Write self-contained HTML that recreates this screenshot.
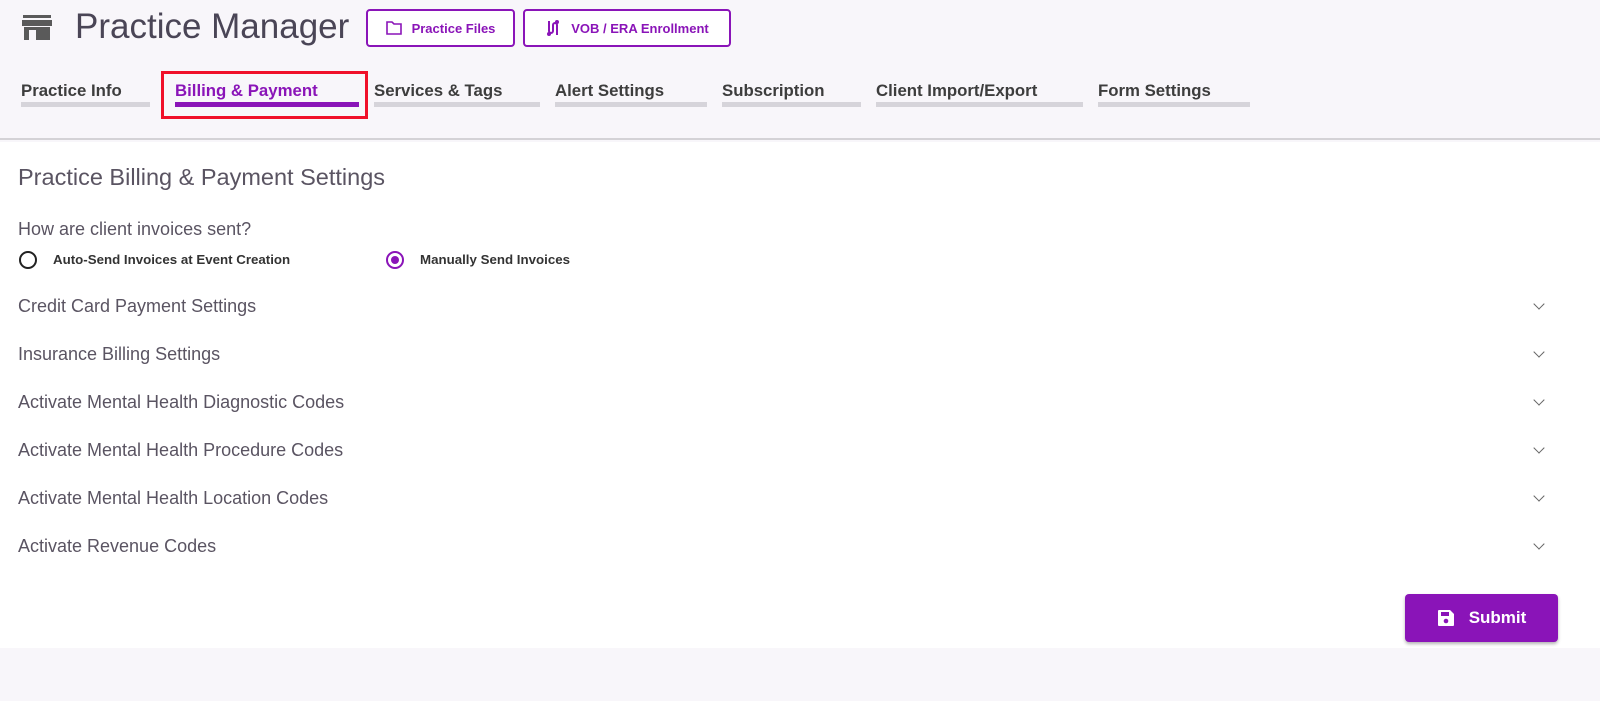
<!DOCTYPE html>
<html><head><meta charset="utf-8"><style>
*{box-sizing:border-box;margin:0;padding:0}
body{width:1600px;height:701px;background:#f8f6fa;font-family:"Liberation Sans",sans-serif;color:#555;position:relative;overflow:hidden}
.abs{position:absolute}
.hdr{left:0;top:0;width:1600px;height:140px;background:#f8f6fa;border-bottom:2px solid #d4d2d6}
.title{left:75px;top:7px;font-size:35px;color:#4a4556;letter-spacing:0}
.btn{border:2px solid #8a14b8;border-radius:4px;color:#8a14b8;font-size:13px;background:#fff;display:flex;align-items:center;justify-content:center;gap:10px;font-weight:bold}
.tab{top:81px;font-size:16.8px;font-weight:bold;color:#3d3d3d}
.ul{top:102px;height:5px;background:#d6d4da}
.main{left:0;top:142px;width:1600px;height:506px;background:#fff}
.sec{left:18px;font-size:18px;color:#5a5462}
.chev{left:1535px;width:8px;height:8px;border-right:1.8px solid #666;border-bottom:1.8px solid #666;transform:rotate(45deg)}
</style></head><body>
<div class="abs hdr"></div>
<svg class="abs" style="left:22px;top:15px" width="30" height="26" viewBox="0 0 30 26"><rect x="1" y="0" width="28" height="3" fill="#5a5a5a"/><path d="M0 5h30l1 6H-1z" fill="#5a5a5a"/><rect x="2" y="12" width="26" height="13" fill="#5a5a5a"/><rect x="7" y="15" width="7" height="10" fill="#f8f6fa"/></svg>
<div class="abs title">Practice Manager</div>
<div class="abs btn" style="left:366px;top:9px;width:149px;height:38px"><svg width="16" height="14" viewBox="0 0 16 14"><path d="M1 1h5l2 2h7v10H1z" fill="none" stroke="#8a14b8" stroke-width="1.6"/></svg>Practice Files</div>
<div class="abs btn" style="left:523px;top:9px;width:208px;height:38px"><svg width="16" height="18" viewBox="0 0 16 18"><path d="M4 2v10a2 2 0 0 0 4 0V6a2 2 0 0 1 4 0v10" fill="none" stroke="#8a14b8" stroke-width="2"/><circle cx="4" cy="15" r="2" fill="#8a14b8"/><circle cx="12" cy="3" r="2" fill="#8a14b8"/></svg>VOB / ERA Enrollment</div>

<div class="abs tab" style="left:21px">Practice Info</div><div class="abs ul" style="left:21px;width:129px"></div>
<div class="abs tab" style="left:175px;color:#8a14b8">Billing &amp; Payment</div><div class="abs ul" style="left:175px;width:184px;background:#8a14b8"></div>
<div class="abs tab" style="left:374px">Services &amp; Tags</div><div class="abs ul" style="left:374px;width:166px"></div>
<div class="abs tab" style="left:555px">Alert Settings</div><div class="abs ul" style="left:555px;width:152px"></div>
<div class="abs tab" style="left:722px">Subscription</div><div class="abs ul" style="left:722px;width:139px"></div>
<div class="abs tab" style="left:876px">Client Import/Export</div><div class="abs ul" style="left:876px;width:207px"></div>
<div class="abs tab" style="left:1098px">Form Settings</div><div class="abs ul" style="left:1098px;width:152px"></div>
<div class="abs" style="left:161px;top:71px;width:207px;height:48px;border:3px solid #f0102a"></div>

<div class="abs main"></div>
<div class="abs" style="left:18px;top:164px;font-size:23.5px;color:#5a5462">Practice Billing &amp; Payment Settings</div>
<div class="abs sec" style="top:219px">How are client invoices sent?</div>
<div class="abs" style="left:19px;top:251px;width:18px;height:18px;border:2px solid #222;border-radius:50%"></div>
<div class="abs" style="left:53px;top:252px;font-size:13.3px;font-weight:bold;color:#333">Auto-Send Invoices at Event Creation</div>
<div class="abs" style="left:386px;top:251px;width:18px;height:18px;border:2px solid #8a14b8;border-radius:50%"><div style="margin:3px;width:8px;height:8px;border-radius:50%;background:#8a14b8"></div></div>
<div class="abs" style="left:420px;top:252px;font-size:13.3px;font-weight:bold;color:#333">Manually Send Invoices</div>

<div class="abs sec" style="top:296px">Credit Card Payment Settings</div><div class="abs chev" style="top:300px"></div>
<div class="abs sec" style="top:344px">Insurance Billing Settings</div><div class="abs chev" style="top:348px"></div>
<div class="abs sec" style="top:392px">Activate Mental Health Diagnostic Codes</div><div class="abs chev" style="top:396px"></div>
<div class="abs sec" style="top:440px">Activate Mental Health Procedure Codes</div><div class="abs chev" style="top:444px"></div>
<div class="abs sec" style="top:488px">Activate Mental Health Location Codes</div><div class="abs chev" style="top:492px"></div>
<div class="abs sec" style="top:536px">Activate Revenue Codes</div><div class="abs chev" style="top:540px"></div>

<div class="abs" style="left:1405px;top:594px;width:153px;height:48px;background:#8a14b8;border-radius:4px;box-shadow:0 2px 3px rgba(0,0,0,.3);color:#fff;font-weight:bold;font-size:17px;display:flex;align-items:center;justify-content:center;gap:14px"><svg width="18" height="18" viewBox="0 0 18 18"><path d="M2 1h11l4 4v11a1 1 0 0 1-1 1H2a1 1 0 0 1-1-1V2a1 1 0 0 1 1-1z" fill="#fff"/><rect x="4" y="3" width="8" height="4" fill="#8a14b8"/><circle cx="9" cy="12" r="2.3" fill="#8a14b8"/></svg>Submit</div>
</body></html>
